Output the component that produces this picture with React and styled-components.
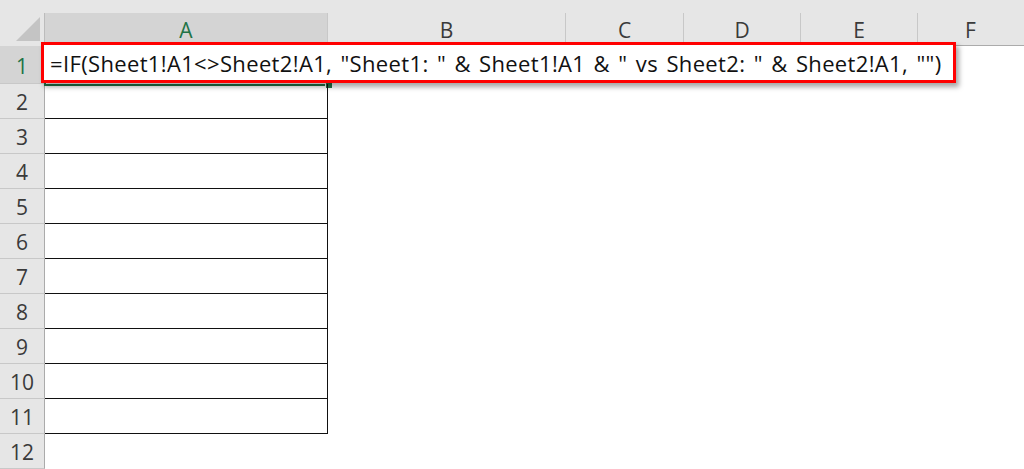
import React from "react";
import styled, { createGlobalStyle } from "styled-components";

const GlobalStyle = createGlobalStyle`
  html, body { margin: 0; padding: 0; background: #ffffff; }
  body { overflow: hidden; font-family: "Open Sans", "Liberation Sans", sans-serif; }
`;

const COLS = "45px 283px 238px 118px 117px 117px 1fr";

const Sheet = styled.div`
  position: relative;
  width: 1024px;
  height: 469px;
  overflow: hidden;
  background: #ffffff;
  display: flex;
  flex-direction: column;
`;

const TopBand = styled.div`
  height: 13px;
  background: #e6e6e6;
`;

const HeaderRow = styled.div`
  display: grid;
  grid-template-columns: ${COLS};
  height: 33px;
  box-sizing: border-box;
  border-bottom: 1px solid #ababab;
  background: #e6e6e6;
`;

const Corner = styled.div`
  position: relative;
  border-right: 1px solid #bcbcbc;
  display: flex;
  align-items: flex-end;
  justify-content: flex-end;
  padding: 0 4px 3px 0;
`;

const ColHeader = styled.div`
  display: flex;
  align-items: center;
  justify-content: center;
  box-sizing: border-box;
  border-right: 1px solid ${(p) => (p.$last ? "transparent" : "#c8c8c8")};
  background: ${(p) => (p.$selected ? "#d4d4d4" : "#e6e6e6")};
  color: ${(p) => (p.$selected ? "#217346" : "#3a3a3a")};
  font-size: 21px;
  padding-top: 3px;
`;

const Row = styled.div`
  display: grid;
  grid-template-columns: ${COLS};
  height: ${(p) => p.$h}px;
  box-sizing: border-box;
`;

const RowHeader = styled.div`
  display: flex;
  align-items: center;
  justify-content: center;
  box-sizing: border-box;
  background: ${(p) => (p.$selected ? "#d4d4d4" : "#e6e6e6")};
  color: ${(p) => (p.$selected ? "#217346" : "#3a3a3a")};
  border-right: 1px solid #ababab;
  border-bottom: 1px solid #c8c8c8;
  font-size: 21px;
  padding-top: 2px;
`;

const Cell = styled.div`
  position: relative;
  box-sizing: border-box;
  border-right: ${(p) => (p.$bordered ? "1px solid #111111" : "none")};
  border-bottom: ${(p) => (p.$bordered ? "1px solid #111111" : "none")};
`;

const Selection = styled.div`
  position: absolute;
  inset: -1px -2px -2px -1px;
  border: 2px solid #217346;
`;

const FillHandle = styled.div`
  position: absolute;
  right: -5px;
  bottom: -5px;
  width: 6px;
  height: 6px;
  background: #217346;
  border: 1px solid #ffffff;
`;

const FormulaBox = styled.div`
  position: absolute;
  left: 41px;
  top: 42px;
  width: 915px;
  height: 41px;
  box-sizing: border-box;
  border: 3px solid #ff0000;
  background: #ffffff;
  box-shadow: 3px 4px 5px rgba(0, 0, 0, 0.35);
  display: flex;
  align-items: center;
  padding-left: 6px;
  font-size: 22px;
  color: #111111;
  white-space: nowrap;
  letter-spacing: 0.35px;
  word-spacing: 2.3px;
`;

const columns = ["A", "B", "C", "D", "E", "F"];
const rows = Array.from({ length: 12 }, (_, i) => i + 1);

export default function App() {
  return (
    <>
      <GlobalStyle />
      <Sheet>
        <TopBand />
        <HeaderRow>
          <Corner>
            <svg width="24" height="24" viewBox="0 0 24 24">
              <polygon points="24,0 24,24 0,24" fill="#c4c4c4" />
            </svg>
          </Corner>
          {columns.map((c, i) => (
            <ColHeader key={c} $selected={c === "A"} $last={i === columns.length - 1}>
              {c}
            </ColHeader>
          ))}
          <ColHeader $last />
        </HeaderRow>
        {rows.map((r) => (
          <Row key={r} $h={r === 1 ? 38 : 35}>
            <RowHeader $selected={r === 1}>{r}</RowHeader>
            <Cell $bordered={r >= 2 && r <= 11}>
              {r === 1 && (
                <Selection>
                  <FillHandle />
                </Selection>
              )}
            </Cell>
            <Cell />
            <Cell />
            <Cell />
            <Cell />
            <Cell />
          </Row>
        ))}
        <FormulaBox>
          =IF(Sheet1!A1&lt;&gt;Sheet2!A1, "Sheet1: " &amp; Sheet1!A1 &amp; " vs Sheet2: " &amp; Sheet2!A1, "")
        </FormulaBox>
      </Sheet>
    </>
  );
}
